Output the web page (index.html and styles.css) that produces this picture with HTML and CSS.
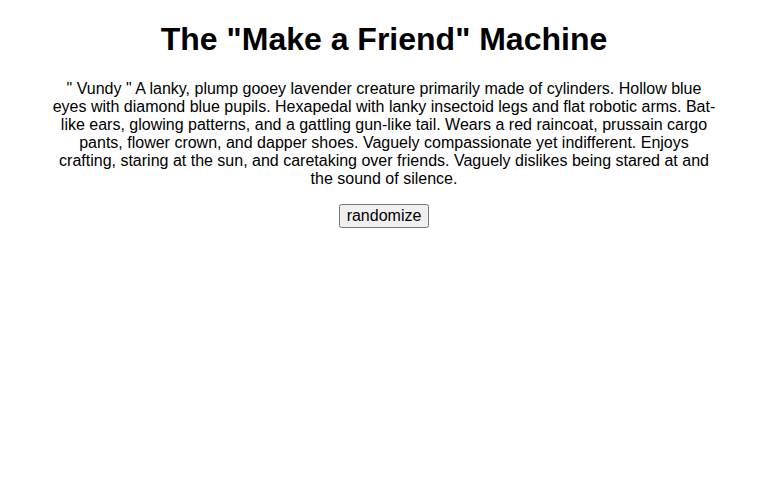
FILE: index.html
```html
<!DOCTYPE html>
<html lang="en">
<head>
  <meta charset="UTF-8">
  <title>The "Make a Friend" Machine</title>
  <link rel="stylesheet" href="styles.css">
</head>
<body>

  <div class="container">
    <h1 class="title">The "Make a Friend" Machine</h1>

    <p class="friend" id="friend">" Vundy " A lanky, plump gooey lavender creature primarily made of cylinders. Hollow blue eyes with diamond blue pupils. Hexapedal with lanky insectoid legs and flat robotic arms. Bat-like ears, glowing patterns, and a gattling gun-like tail. Wears a red raincoat, prussain cargo pants, flower crown, and dapper shoes. Vaguely compassionate yet indifferent. Enjoys crafting, staring at the sun, and caretaking over friends. Vaguely dislikes being stared at and the sound of silence.</p>

    <div class="btn-container">
      <button class="random-btn" id="randomBtn">randomize</button>
    </div>
  </div>

</body>
</html>
```

FILE: styles.css
```css
body {
  margin: 0;
  font-family: 'Liberation Sans', Arial, sans-serif;
  text-align: center;
  color: #000;
  background-color: #fff;
}

.container {
  max-width: 666px;
  margin: 0 auto;
}

.title {
  font-size: 32px;
  font-weight: 700;
}

.friend {
  font-size: 16px;
}

.random-btn {
  font-family: 'Liberation Sans', Arial, sans-serif;
  font-size: 16px;
}
```
